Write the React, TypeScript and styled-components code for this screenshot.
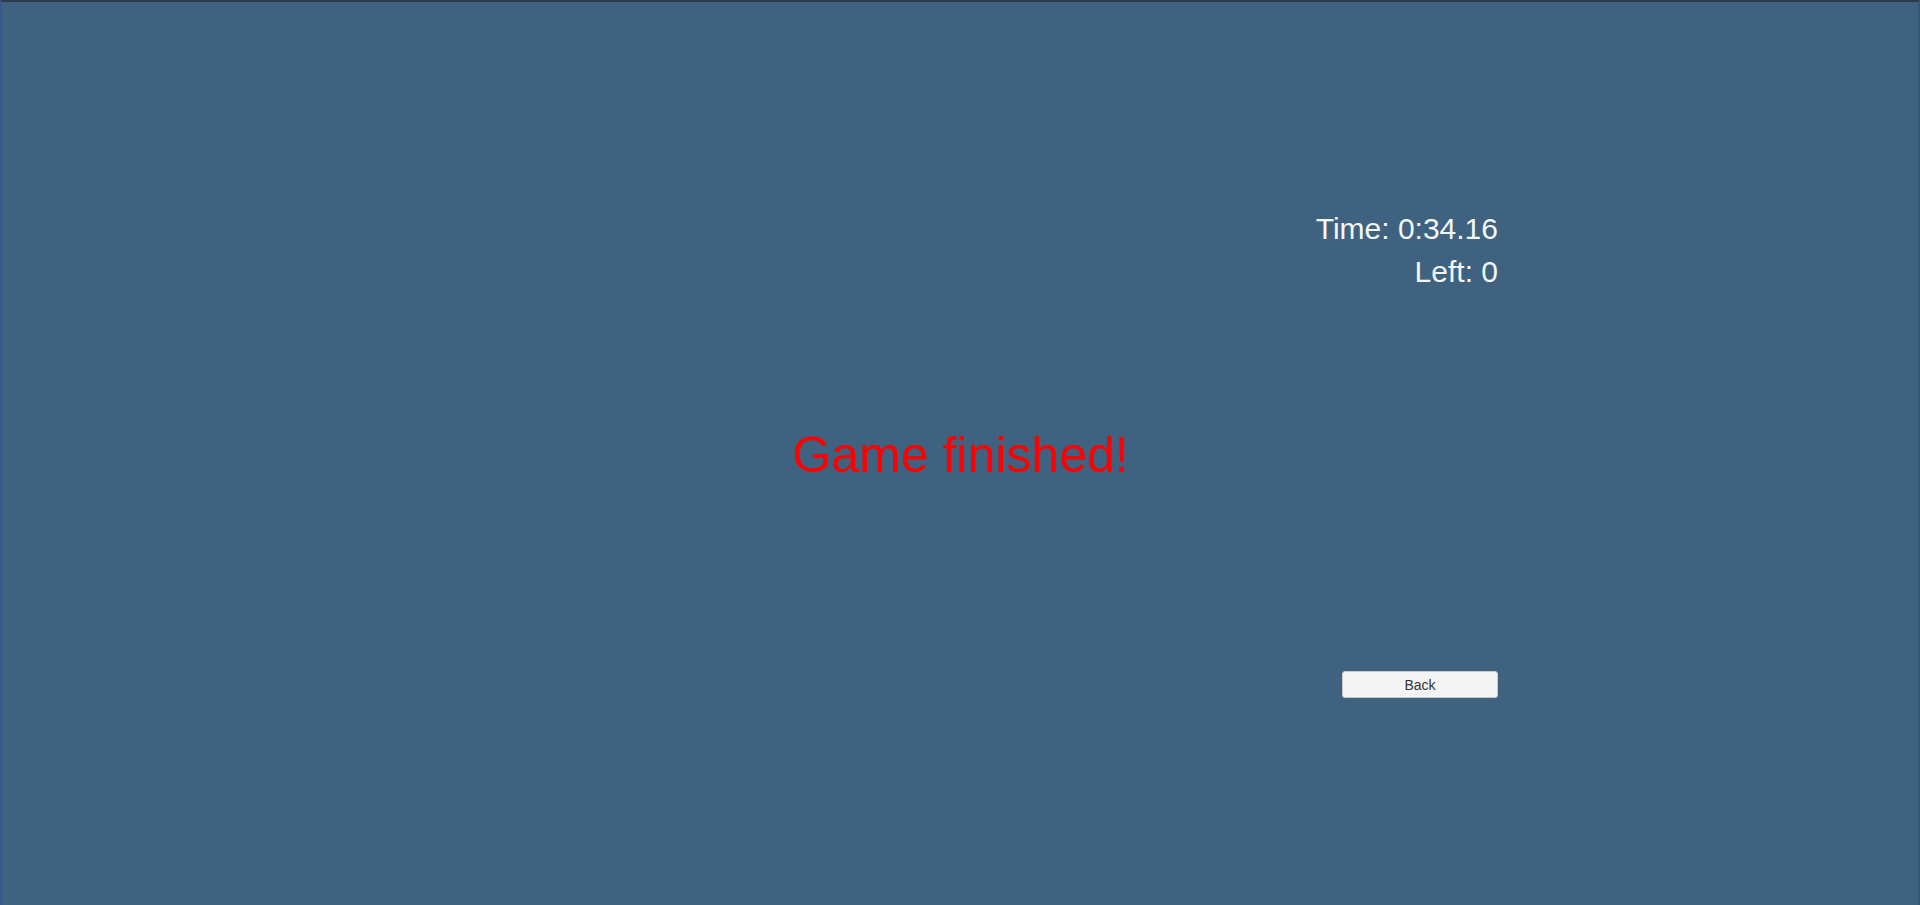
import styled, { createGlobalStyle } from "styled-components";

const GlobalStyle = createGlobalStyle`
	html, body {
		margin: 0;
		padding: 0;
		height: 100%;
		overflow: hidden;
	}
	body {
		font-family: "Liberation Sans", Arial, sans-serif;
	}
`;

const Screen = styled.main`
	box-sizing: border-box;
	width: 100vw;
	height: 100vh;
	display: grid;
	grid-template: 1fr / 1fr;
	background: #3e627f;
	border-top: 2px solid #2c3a48;
	border-left: 2px solid #3a5790;
	border-right: 2px solid #35557a;
`;

const Title = styled.h1`
	grid-area: 1 / 1;
	place-self: center;
	margin: 3px 0 0 1px;
	font-size: 50px;
	font-weight: 400;
	color: #ff0000;
	line-height: normal;
`;

const Hud = styled.aside`
	grid-area: 1 / 1;
	justify-self: end;
	display: flex;
	flex-direction: column;
	align-items: flex-end;
	padding: 205px 420px 0 0;
`;

const Stat = styled.div`
	font-size: 30px;
	line-height: 43px;
	color: #f4f6f8;
`;

const BackButton = styled.button`
	margin-top: 378px;
	width: 156px;
	height: 27px;
	padding: 0;
	font-family: inherit;
	font-size: 14px;
	color: #333;
	background: #f4f4f4;
	border: 1px solid #c8c8c8;
	border-radius: 3px;
	cursor: pointer;
`;

export default function App() {
	return (
		<>
			<GlobalStyle />
			<Screen>
				<Title>Game finished!</Title>
				<Hud>
					<Stat>Time: 0:34.16</Stat>
					<Stat>Left: 0</Stat>
					<BackButton>Back</BackButton>
				</Hud>
			</Screen>
		</>
	);
}
